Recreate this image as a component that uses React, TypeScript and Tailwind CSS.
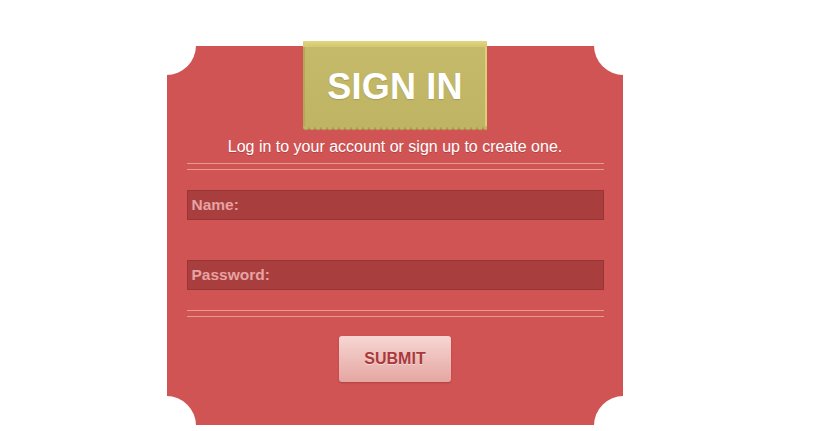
import React from 'react';

// scalloped bottom edge of the ribbon
function Scallops() {
  const bumps = Array.from({ length: 31 }, (_, i) => i);
  return (
    <svg width="184" height="5" viewBox="0 0 184 5" className="block">
      {bumps.map((i) => (
        <circle key={i} cx={3 + i * 6} cy={0.5} r={3.4} fill="#c0b565" stroke="#a8984f" strokeWidth={0.8} />
      ))}
      <rect x="0" y="0" width="184" height="1" fill="#bfb464" />
    </svg>
  );
}

function Field({ label }: { label: string }) {
  return (
    <div className="w-[417px] h-[30px] bg-[#a93e3f] border border-[#9b3435] flex items-center pl-[4px]">
      <span className="text-[15.5px] font-bold text-[#e6a3a1]">{label}</span>
    </div>
  );
}

function DoubleRule() {
  return (
    <div className="w-[417px] flex flex-col gap-[5px]">
      <div className="h-px bg-[#e79893]" />
      <div className="h-px bg-[#e79893]" />
    </div>
  );
}

export default function App() {
  return (
    <div className="w-[817px] h-[431px] bg-white overflow-hidden font-['Liberation_Sans',Arial,sans-serif]">
      <div className="relative ml-[167px] mt-[46px] w-[456px] h-[379px] bg-[#d05454] flex flex-col items-center">
        {/* cut corners */}
        <div className="absolute -left-[30px] -top-[30px] w-[59px] h-[59px] rounded-full bg-white" />
        <div className="absolute -right-[30px] -top-[30px] w-[59px] h-[59px] rounded-full bg-white" />
        <div className="absolute -left-[30px] -bottom-[30px] w-[59px] h-[59px] rounded-full bg-white" />
        <div className="absolute -right-[30px] -bottom-[30px] w-[59px] h-[59px] rounded-full bg-white" />

        {/* ribbon */}
        <div className="relative -mt-[5px] w-[184px] flex flex-col">
          <div className="h-[6px] bg-gradient-to-b from-[#e2d680] to-[#d2c671]" />
          <div className="h-[79px] bg-gradient-to-b from-[#c5ba69] to-[#bfb464] flex items-center justify-center relative">
            <div className="absolute left-0 top-0 bottom-0 w-[2px] bg-[#b3a75a]" />
            <div className="absolute right-0 top-0 bottom-0 w-[2px] bg-[#dccf79]" />
            <span className="text-[36px] leading-none font-bold text-white tracking-[0.2px] [text-shadow:0_1px_1px_rgba(120,110,40,0.35)]">
              SIGN IN
            </span>
          </div>
          <Scallops />
        </div>

        <p className="mt-[7px] text-[16px] leading-[18px] text-white [text-shadow:0_1px_0_rgba(120,30,30,0.35)]">
          Log in to your account or sign up to create one.
        </p>

        <div className="mt-[7px]">
          <DoubleRule />
        </div>

        <div className="mt-[20px]">
          <Field label="Name:" />
        </div>
        <div className="mt-[40px]">
          <Field label="Password:" />
        </div>

        <div className="mt-[20px]">
          <DoubleRule />
        </div>

        <button className="mt-[19px] w-[112px] h-[46px] rounded-[3px] bg-gradient-to-b from-[#f7d6d3] to-[#e4a6a2] shadow-[0_1px_2px_rgba(120,30,30,0.35)] text-[16px] font-bold text-[#a9393b] [text-shadow:0_1px_0_rgba(255,255,255,0.5)]">
          SUBMIT
        </button>
      </div>
    </div>
  );
}
